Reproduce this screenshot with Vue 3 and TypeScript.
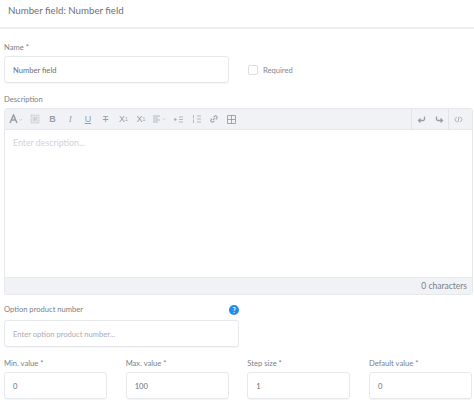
<script setup lang="ts">
const numberFields = [
  { label: 'Min. value *', value: '0' },
  { label: 'Max. value *', value: '100' },
  { label: 'Step size *', value: '1' },
  { label: 'Default value *', value: '0' },
]
</script>

<template>
  <div class="page">
    <header class="head">Number field: Number field</header>
    <div class="body">
      <div class="name-row">
        <div class="field">
          <label class="lbl">Name *</label>
          <div class="input dark">Number field</div>
        </div>
        <div class="req"><span class="check"></span><span>Required</span></div>
      </div>

      <label class="lbl desc-lbl">Description</label>
      <div class="editor">
        <div class="toolbar">
          <div class="tools">
            <span class="tool w16"><svg width="14" height="10" viewBox="0 0 14 10"><path d="M1 9 4.500 1 8 9M2.500 6h4" fill="none" stroke="#999da5" stroke-width="1.500"/><path d="M10 5l1.500 1.500L13 5" fill="none" stroke="#c4c7cc" stroke-width=".8"/></svg></span>
            <span class="tool"><svg width="10" height="10" viewBox="0 0 10 10"><rect x="1" y="1" width="8" height="8" fill="#e3e5e9" stroke="#c6c9cf" stroke-dasharray="1.500 1"/><circle cx="5" cy="5" r="2" fill="#ced1d6"/></svg></span>
            <span class="tool txt bold">B</span>
            <span class="tool txt ital">I</span>
            <span class="tool txt under">U</span>
            <span class="tool txt strike">T</span>
            <span class="tool txt">X<sup>1</sup></span>
            <span class="tool txt">X<sub>1</sub></span>
            <span class="tool w16"><svg width="13" height="8" viewBox="0 0 13 8"><path d="M0 1h7M0 3h5M0 5h7M0 7h5" stroke="#a5a9b0" stroke-width=".8" fill="none"/><path d="M9.500 3.500l1.300 1.300L12 3.500" fill="none" stroke="#c4c7cc" stroke-width=".8"/></svg></span>
            <span class="tool"><svg width="9" height="7" viewBox="0 0 9 7"><circle cx="1.300" cy="3.500" r="1.200" fill="#a5a9b0"/><path d="M5 1h4M5 3.500h4M5 6h4" stroke="#a5a9b0" stroke-width=".8" fill="none"/></svg></span>
            <span class="tool"><svg width="9" height="8" viewBox="0 0 9 8"><path d="M1.500 0v3.500M1.500 4.500v3.500M5 1h4M5 4h4M5 7h4" stroke="#a5a9b0" stroke-width=".8" fill="none"/></svg></span>
            <span class="tool"><svg width="8" height="8" viewBox="0 0 9 9"><path d="M3.500 5.500 5.500 3.500M4 2.500l1-1a1.400 1.400 0 0 1 2.500 2.500l-1 1M5 6.500l-1 1A1.400 1.400 0 0 1 1.500 5l1-1" fill="none" stroke="#999da5" stroke-width="1.200"/></svg></span>
            <span class="tool"><svg width="9" height="9" viewBox="0 0 9 9"><path d="M.5.500h8v8h-8zM.5 4.500h8M4.500.5v8" fill="none" stroke="#999da5" stroke-width=".9"/></svg></span>
          </div>
          <div class="tool-group">
            <span class="tool g"><svg width="9" height="9" viewBox="0 0 9 9"><path d="M7.500 1.500v2.500a1.500 1.500 0 0 1-1.500 1.500H2M3.500 3.500 1.500 5.500l2 2" fill="none" stroke="#999da5" stroke-width="1.300"/></svg></span>
            <span class="tool g"><svg width="9" height="9" viewBox="0 0 9 9"><path d="M1.500 1.500v2.500a1.500 1.500 0 0 0 1.500 1.500h4M5.500 3.500l2 2-2 2" fill="none" stroke="#999da5" stroke-width="1.300"/></svg></span>
          </div>
          <div class="tool-group code">
            <span class="tool"><svg width="9" height="7" viewBox="0 0 10 8"><path d="M3 1 .8 4 3 7M7 1l2.200 3L7 7M5.600.8 4.400 7.200" fill="none" stroke="#a5a9b0"/></svg></span>
          </div>
        </div>
        <div class="content">Enter description...</div>
        <div class="foot">0 characters</div>
      </div>

      <div class="option">
        <div class="option-lbl">
          <label class="lbl">Option product number</label>
          <span class="help">?</span>
        </div>
        <div class="input ph">Enter option product number...</div>
      </div>

      <div class="numbers">
        <div v-for="f in numberFields" :key="f.label" class="field">
          <label class="lbl">{{ f.label }}</label>
          <div class="input dark">{{ f.value }}</div>
        </div>
      </div>
    </div>
  </div>
</template>

<style scoped>
.page {
  width: 474px;
  height: 403px;
  overflow: hidden;
  background: #fff;
  font-family: Lato, sans-serif;
  font-size: 7.600px;
  color: #6a707a;
}
.head {
  height: 29px;
  box-sizing: border-box;
  padding: 3px 8px 0;
  line-height: 15px;
  font-size: 9.700px;
  color: #6a707a;
  border-bottom: 2px solid #eeeff1;
}
.body {
  padding: 13px 1px 0 4px;
}
.lbl {
  display: block;
  height: 15px;
  line-height: 11px;
  font-size: 7.600px;
  color: #7a7f88;
}
.name-row {
  display: flex;
  align-items: flex-end;
}
.name-row .field {
  width: 225px;
}
.name-row .lbl {
  height: 14px;
}
.input {
  height: 27px;
  box-sizing: border-box;
  border: 1px solid #e6e8eb;
  border-radius: 3px;
  padding: 0 8px;
  display: flex;
  align-items: center;
  font-size: 7.600px;
  box-shadow: 0 1px 1px #f3f4f5;
}
.dark { color: #6a707a; }
.ph { color: #a9adb4; }
.req {
  display: flex;
  align-items: center;
  height: 27px;
  margin-left: 19px;
  gap: 5px;
  color: #82868f;
}
.check {
  width: 8px;
  height: 8px;
  border: 1px solid #dcdee2;
  border-radius: 2px;
}
.desc-lbl {
  margin-top: 11px;
  height: 14px;
}
.editor {
  border: 1px solid #e6e8eb;
  border-radius: 3px;
  overflow: hidden;
}
.toolbar {
  height: 20px;
  background: #f1f2f5;
  border-bottom: 1px solid #e6e8eb;
  display: flex;
  align-items: stretch;
}
.tools {
  flex: 1;
  display: flex;
  align-items: center;
  padding-left: 1px;
}
.tool {
  width: 17.700px;
  height: 100%;
  display: flex;
  align-items: center;
  justify-content: center;
  color: #999da5;
}
.tool.w16 { width: 20px; }
.txt {
  font-family: "Liberation Sans", sans-serif;
  font-size: 9px;
  line-height: 1;
}
.txt sup, .txt sub { font-size: 5px; line-height: 0; }
.bold { font-weight: 700; }
.ital { font-style: italic; font-family: "Liberation Serif", serif; }
.under { text-decoration: underline; }
.strike { text-decoration: line-through; }
.tool-group {
  display: flex;
  border-left: 1px solid #e2e4e8;
}
.tool.g { width: 18px; }
.code { width: 23px; }
.code .tool { width: 19px; }
.content {
  height: 147px;
  box-sizing: border-box;
  padding: 5px 8px;
  color: #d0d3d7;
  font-size: 8.800px;
  line-height: 16px;
}
.foot {
  height: 17px;
  background: #f1f2f5;
  border-top: 1px solid #e9eaed;
  box-sizing: border-box;
  text-align: right;
  padding-right: 5px;
  line-height: 16px;
  font-size: 8.500px;
  color: #7a7f88;
}
.option {
  width: 235px;
  margin-top: 9px;
}
.option-lbl {
  display: flex;
  justify-content: space-between;
  align-items: flex-start;
  height: 16px;
}
.help {
  width: 10px;
  height: 10px;
  margin: 1px 0 0;
  border-radius: 50%;
  background: #1f8ceb;
  color: #fff;
  font-size: 7px;
  font-weight: 700;
  line-height: 10px;
  text-align: center;
}
.numbers {
  display: grid;
  grid-template-columns: repeat(4, 103px);
  column-gap: 18.670px;
  margin-top: 11px;
}
.numbers .lbl { height: 14px; }
</style>
